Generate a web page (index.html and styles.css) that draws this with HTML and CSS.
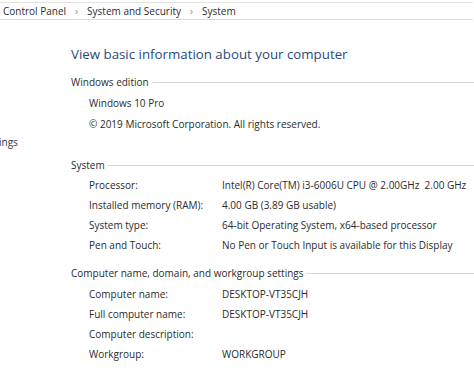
FILE: index.html
```html
<!DOCTYPE html>
<html lang="en">
<head>
  <meta charset="UTF-8" />
  <title>System</title>
  <link rel="stylesheet" href="styles.css">
</head>
<body>
  <div class="address-bar">
    <span class="crumb">Control Panel</span>
    <span class="sep">&rsaquo;</span>
    <span class="crumb">System and Security</span>
    <span class="sep">&rsaquo;</span>
    <span class="crumb">System</span>
  </div>

  <div class="window">
    <div class="side-pane">
      <div class="side-link">ings</div>
    </div>

    <div class="main">
      <h1>View basic information about your computer</h1>

      <div class="section edition">
        <div class="section-title"><span>Windows edition</span></div>
        <div class="plain-row">Windows 10 Pro</div>
        <div class="plain-row">&copy; 2019 Microsoft Corporation. All rights reserved.</div>
      </div>

      <div class="section system">
        <div class="section-title"><span>System</span></div>
        <div class="info-grid">
          <div class="key">Processor:</div>
          <div class="val">Intel(R) Core(TM) i3-6006U CPU @ 2.00GHz&nbsp;&nbsp;2.00 GHz</div>
          <div class="key">Installed memory (RAM):</div>
          <div class="val">4.00 GB (3.89 GB usable)</div>
          <div class="key">System type:</div>
          <div class="val">64-bit Operating System, x64-based processor</div>
          <div class="key">Pen and Touch:</div>
          <div class="val">No Pen or Touch Input is available for this Display</div>
        </div>
      </div>

      <div class="section naming">
        <div class="section-title"><span>Computer name, domain, and workgroup settings</span></div>
        <div class="info-grid">
          <div class="key">Computer name:</div>
          <div class="val">DESKTOP-VT35CJH</div>
          <div class="key">Full computer name:</div>
          <div class="val">DESKTOP-VT35CJH</div>
          <div class="key">Computer description:</div>
          <div class="val"></div>
          <div class="key">Workgroup:</div>
          <div class="val">WORKGROUP</div>
        </div>
      </div>
    </div>
  </div>
</body>
</html>
```

FILE: styles.css
```css
* {
  box-sizing: border-box;
}

body {
  margin: 0;
  background: #fff;
  font-family: 'Open Sans', 'Noto Sans', sans-serif;
  font-size: 10px;
  color: #2b2b2b;
  overflow: hidden;
}

.address-bar {
  display: flex;
  align-items: center;
  margin-top: 2px;
  width: 473px;
  height: 18px;
  padding-left: 3px;
  border-top: 1px solid #e3e3e3;
  border-bottom: 1px solid #dcdcdc;
  white-space: nowrap;
}

.sep {
  color: #8a8a8a;
  margin: 0 9px;
}

.window {
  display: flex;
}

.side-pane {
  width: 71px;
  padding-top: 115px;
}

.side-link {
  color: #2d3550;
  margin-left: -1px;
}

.main {
  flex: 1;
}

h1 {
  margin: 24px 0 0;
  font-size: 13.3px;
  font-weight: 400;
  color: #2b4a78;
  line-height: 20px;
}

.section-title {
  display: flex;
  align-items: center;
  height: 20px;
}

.section-title::after {
  content: '';
  flex: 1;
  height: 1px;
  margin-left: 3px;
  background: #d6d6d6;
}

.edition {
  margin-top: 8px;
}

.edition .section-title,
.naming .section-title {
  margin-bottom: 1px;
}

.system {
  margin-top: 20px;
}

.naming {
  margin-top: 8px;
}

.plain-row {
  padding-left: 18px;
  height: 21px;
  line-height: 21px;
}

.info-grid {
  display: grid;
  grid-template-columns: 133px 1fr;
  grid-auto-rows: 20px;
  align-items: center;
  padding-left: 18px;
  white-space: nowrap;
}
```
